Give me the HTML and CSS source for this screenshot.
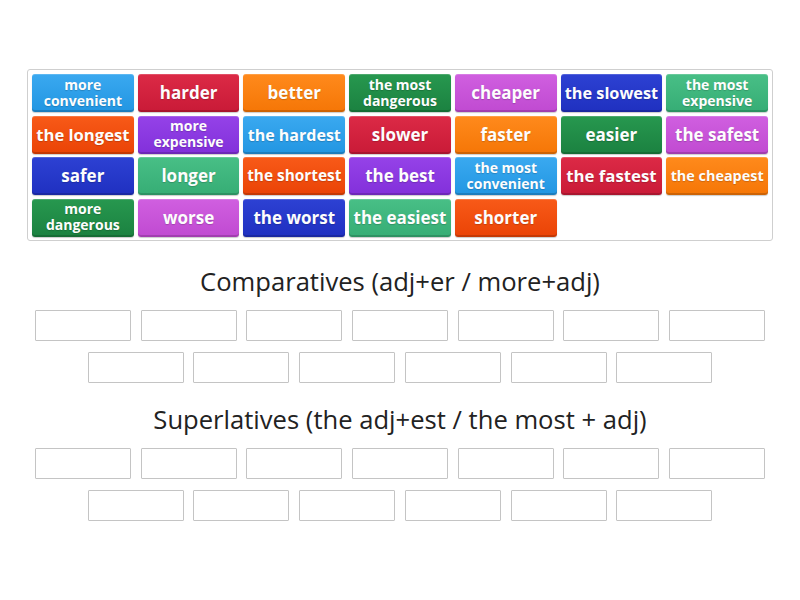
FILE: index.html
```html
<!DOCTYPE html>
<html lang="en">
<head>
<meta charset="utf-8">
<title>Group sort</title>
<link rel="stylesheet" href="styles.css">
</head>
<body>
<main class="page">
  <section class="bank">
    <div class="tile c-lblue two">more<br>convenient</div>
    <div class="tile c-crimson">harder</div>
    <div class="tile c-orange">better</div>
    <div class="tile c-dgreen two">the most<br>dangerous</div>
    <div class="tile c-orchid">cheaper</div>
    <div class="tile c-royal fs-163">the slowest</div>
    <div class="tile c-sea two">the most<br>expensive</div>

    <div class="tile c-ored fs-165">the longest</div>
    <div class="tile c-purple two">more<br>expensive</div>
    <div class="tile c-lblue fs-16">the hardest</div>
    <div class="tile c-crimson">slower</div>
    <div class="tile c-orange">faster</div>
    <div class="tile c-dgreen">easier</div>
    <div class="tile c-orchid">the safest</div>

    <div class="tile c-royal">safer</div>
    <div class="tile c-sea">longer</div>
    <div class="tile c-ored fs-155">the shortest</div>
    <div class="tile c-purple">the best</div>
    <div class="tile c-lblue two">the most<br>convenient</div>
    <div class="tile c-crimson fs-168">the fastest</div>
    <div class="tile c-orange fs-145">the cheapest</div>

    <div class="tile c-dgreen two">more<br>dangerous</div>
    <div class="tile c-orchid">worse</div>
    <div class="tile c-royal">the worst</div>
    <div class="tile c-sea">the easiest</div>
    <div class="tile c-ored">shorter</div>
  </section>

  <section class="group group-first">
    <h2 class="group-title">Comparatives (adj+er / more+adj)</h2>
    <div class="slots">
      <div class="slot"></div><div class="slot"></div><div class="slot"></div><div class="slot"></div><div class="slot"></div><div class="slot"></div><div class="slot"></div>
    </div>
    <div class="slots">
      <div class="slot"></div><div class="slot"></div><div class="slot"></div><div class="slot"></div><div class="slot"></div><div class="slot"></div>
    </div>
  </section>

  <section class="group group-second">
    <h2 class="group-title">Superlatives (the adj+est / the most + adj)</h2>
    <div class="slots">
      <div class="slot"></div><div class="slot"></div><div class="slot"></div><div class="slot"></div><div class="slot"></div><div class="slot"></div><div class="slot"></div>
    </div>
    <div class="slots">
      <div class="slot"></div><div class="slot"></div><div class="slot"></div><div class="slot"></div><div class="slot"></div><div class="slot"></div>
    </div>
  </section>
</main>
</body>
</html>
```

FILE: styles.css
```css
* { box-sizing: border-box; }

html, body {
  margin: 0;
  padding: 0;
  background: #ffffff;
  width: 800px;
  height: 600px;
  overflow: hidden;
}

body {
  font-family: "Open Sans", "Noto Sans", "Liberation Sans", sans-serif;
  color: #222222;
}

.page {
  padding-top: 69px;
}

.bank {
  margin-left: 27px;
  width: 746px;
  height: 172px;
  border: 1px solid #cfcfcf;
  border-radius: 3px;
  padding: 4px 4px 3px 4px;
  display: grid;
  grid-template-columns: repeat(7, 1fr);
  grid-auto-rows: 38px;
  column-gap: 4px;
  row-gap: 3.67px;
  align-content: start;
}

.tile {
  display: flex;
  align-items: center;
  justify-content: center;
  text-align: center;
  white-space: nowrap;
  color: #fdfdfd;
  font-weight: 700;
  font-size: 17px;
  line-height: 20px;
  letter-spacing: 0;
  border-radius: 3px;
  text-shadow: 0 1px 1px rgba(0, 0, 0, 0.18);
  box-shadow: inset 0 -2px 0 rgba(0, 0, 0, 0.16), inset 0 1px 0 rgba(255, 255, 255, 0.18), 0 1px 1px rgba(0, 0, 0, 0.2);
  overflow: hidden;
}

.tile.two {
  font-size: 14px;
  line-height: 16px;
  padding-bottom: 1px;
}

.fs-168 { font-size: 16.8px; }
.fs-165 { font-size: 16.6px; }
.fs-163 { font-size: 16.3px; }
.fs-16 { font-size: 16px; }
.fs-155 { font-size: 15.4px; }
.fs-145 { font-size: 14.4px; }

.c-lblue   { background: linear-gradient(#3aa9f0, #2296e2); }
.c-crimson { background: linear-gradient(#dc2a46, #c91a37); }
.c-orange  { background: linear-gradient(#ff8a1c, #f57606); }
.c-dgreen  { background: linear-gradient(#27984f, #1b8140); }
.c-orchid  { background: linear-gradient(#d05fe0, #c04ad1); }
.c-royal   { background: linear-gradient(#2d41d3, #1f30c0); }
.c-sea     { background: linear-gradient(#48bf86, #36ad75); }
.c-ored    { background: linear-gradient(#f85a18, #ea4306); }
.c-purple  { background: linear-gradient(#9542e8, #8230da); }

.group-first { margin-top: 23px; }
.group-second { margin-top: 19.5px; }

.group-title {
  margin: 0 0 11px 0;
  font-weight: 400;
  font-size: 25.6px;
  line-height: 35px;
  text-align: center;
  color: #222222;
}

.slots {
  display: flex;
  justify-content: center;
  gap: 9.7px;
}

.slots + .slots { margin-top: 10.5px; }

.slot {
  width: 96px;
  height: 31px;
  border: 1px solid #c4c4c4;
  border-radius: 1px;
  background: #ffffff;
}
```
